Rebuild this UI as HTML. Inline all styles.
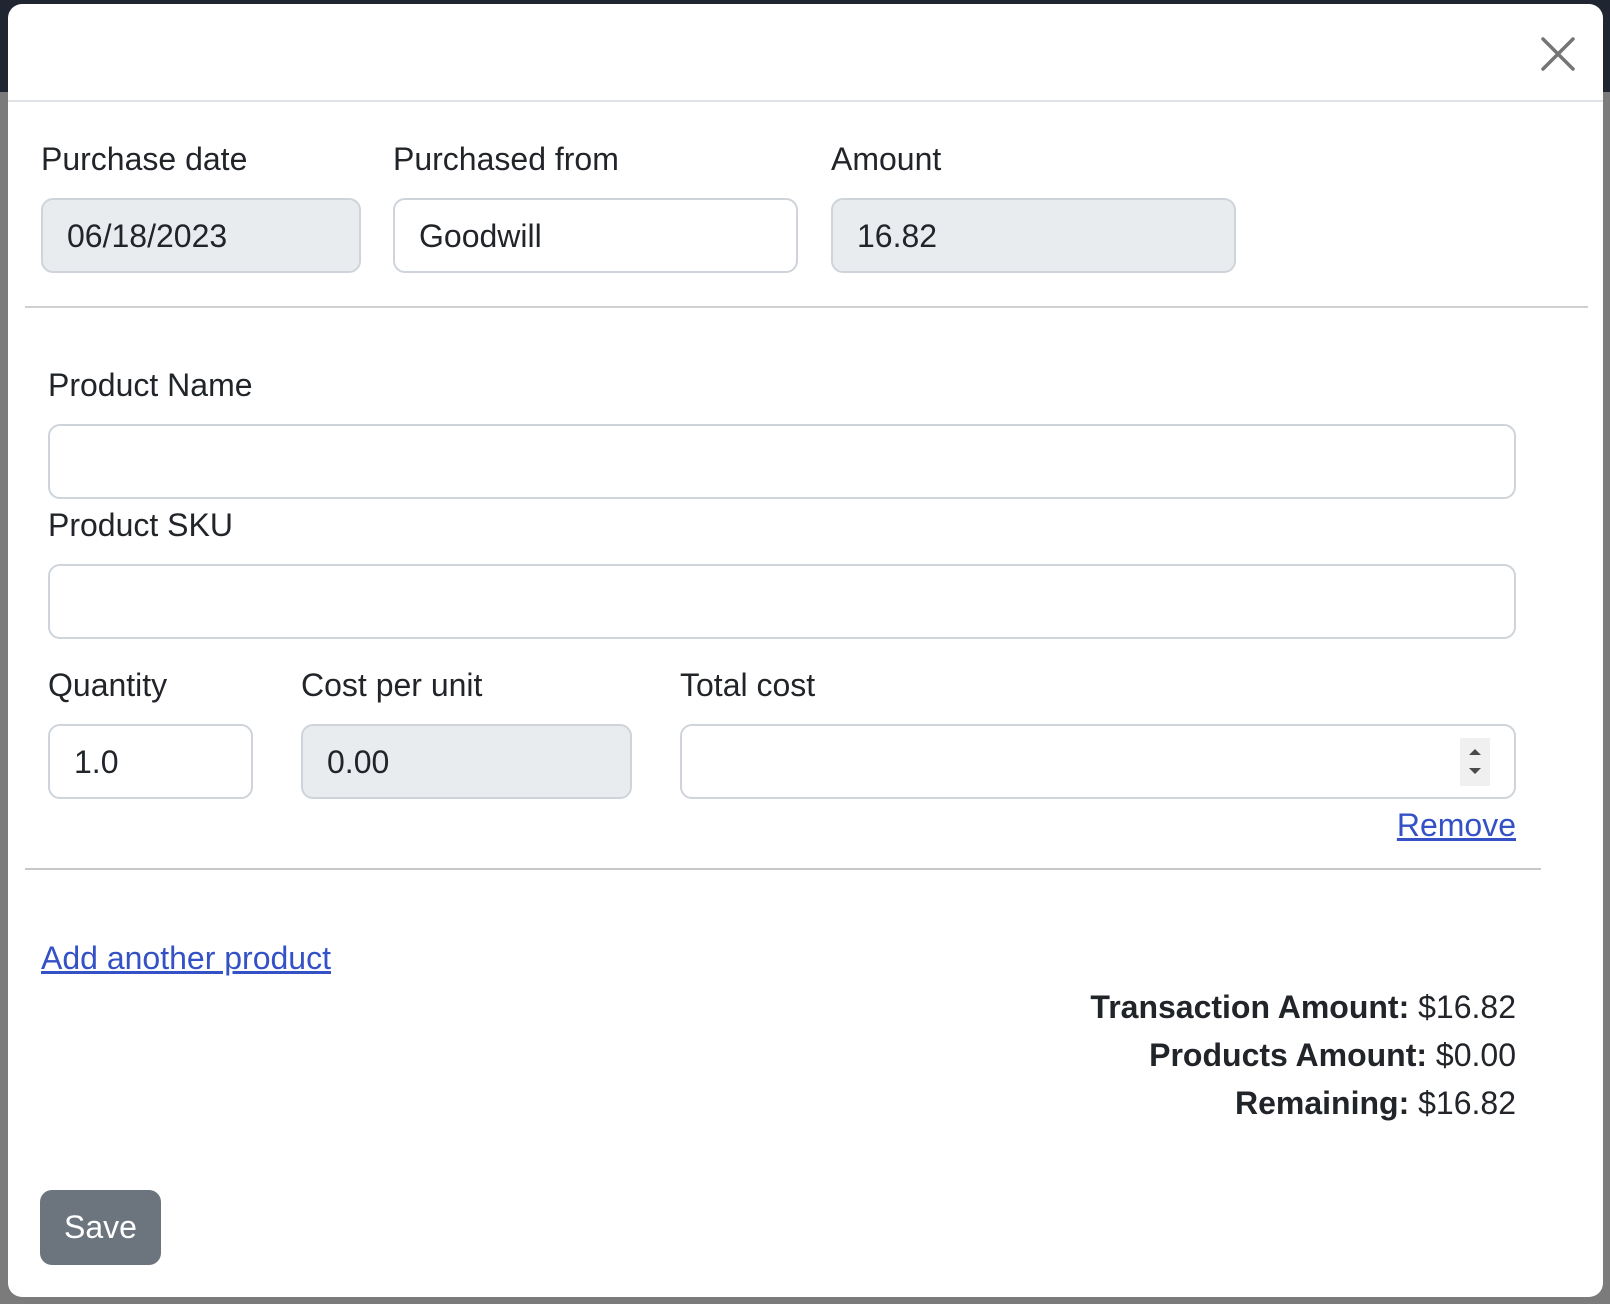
<!DOCTYPE html>
<html><head><meta charset="utf-8"><style>
*{box-sizing:border-box;margin:0;padding:0}
body{width:1610px;height:1304px;background:#7b7b7b;position:relative;overflow:hidden;font-family:"Liberation Sans",sans-serif;color:#212529}
.top{position:absolute;left:0;top:0;width:1610px;height:92px;background:#1f2631}
.modal{position:absolute;left:8px;top:4px;width:1595px;height:1293px;background:#fff;border-radius:14px}
.hdr{position:absolute;left:0;top:0;width:100%;height:98px;border-bottom:2px solid #dee2e6}
.x{position:absolute;left:1532px;top:32px}
.a{position:absolute}
.lbl{font-size:32px;line-height:48px}
.inp{position:absolute;border:2px solid #ced4da;border-radius:12px;height:75px;font-size:32px;line-height:73px;padding-left:24px;background:#fff}
.ro{background:#e9ecef}
.hr{position:absolute;height:2px;background:#c8c8c8}
a{color:#3451c6;text-decoration:underline;font-size:32px;line-height:48px}
.sum{position:absolute;right:87px;top:979px;text-align:right;font-size:32px;line-height:48px}
.btn{position:absolute;left:32px;top:1186px;width:121px;height:75px;background:#6c757d;color:#fff;border-radius:12px;font-size:32px;line-height:75px;text-align:center}
</style></head><body>
<div class="top"></div>
<div class="modal">
<div class="hdr"><svg class="x" width="36" height="36" viewBox="0 0 36 36"><path d="M3 3L33 33M33 3L3 33" stroke="#757575" stroke-width="3.5" stroke-linecap="round"/></svg></div>
<div class="a lbl" style="left:33px;top:131px">Purchase date</div>
<div class="a lbl" style="left:385px;top:131px">Purchased from</div>
<div class="a lbl" style="left:823px;top:131px">Amount</div>
<div class="inp ro" style="left:33px;top:194px;width:320px">06/18/2023</div>
<div class="inp" style="left:385px;top:194px;width:405px">Goodwill</div>
<div class="inp ro" style="left:823px;top:194px;width:405px">16.82</div>
<div class="hr" style="left:17px;top:302px;width:1563px;background:#d0d0d0"></div>
<div class="a lbl" style="left:40px;top:357px">Product Name</div>
<div class="inp" style="left:40px;top:420px;width:1468px"></div>
<div class="a lbl" style="left:40px;top:497px">Product SKU</div>
<div class="inp" style="left:40px;top:560px;width:1468px"></div>
<div class="a lbl" style="left:40px;top:657px">Quantity</div>
<div class="a lbl" style="left:293px;top:657px">Cost per unit</div>
<div class="a lbl" style="left:672px;top:657px">Total cost</div>
<div class="inp" style="left:40px;top:720px;width:205px">1.0</div>
<div class="inp ro" style="left:293px;top:720px;width:331px">0.00</div>
<div class="inp" style="left:672px;top:720px;width:836px"><div style="position:absolute;right:24px;top:12px;width:30px;height:48px;background:#f0f0f0"><svg width="30" height="48" viewBox="0 0 30 48"><path d="M9 17L15 11L21 17Z M9 30L21 30L15 36Z" fill="#4a4a4a"/></svg></div></div>
<a class="a" style="right:87px;top:797px">Remove</a>
<div class="hr" style="left:17px;top:864px;width:1516px"></div>
<a class="a" style="left:33px;top:930px">Add another product</a>
<div class="sum"><div><b>Transaction Amount:</b> $16.82</div><div><b>Products Amount:</b> $0.00</div><div><b>Remaining:</b> $16.82</div></div>
<div class="btn">Save</div>
</div>
</body></html>
